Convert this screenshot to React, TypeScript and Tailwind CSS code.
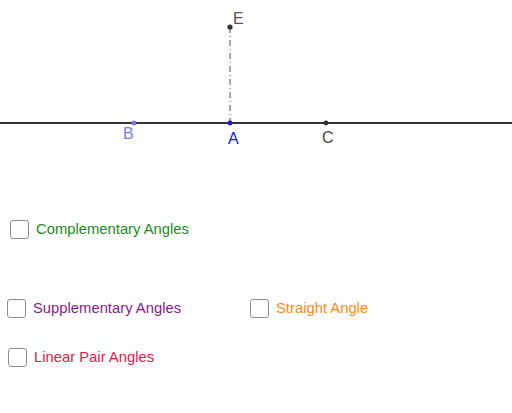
import React from "react";

function Check({ label, color }: { label: string; color: string }) {
  return (
    <label className="flex items-center gap-[7px] cursor-pointer select-none">
      <span className="block h-[19px] w-[19px] rounded-[3px] border border-[#8f8f8f] bg-white" />
      <span className={`text-[14.8px] leading-none ${color}`}>{label}</span>
    </label>
  );
}

export default function App() {
  return (
    <div className="h-[413px] w-[512px] overflow-hidden bg-white font-['Liberation_Sans',Arial,sans-serif]">
      <svg width="512" height="160" viewBox="0 0 512 160" className="block">
        <line x1="0" y1="123" x2="512" y2="123" stroke="#333" strokeWidth="2" />
        <line x1="230" y1="27" x2="230" y2="123" stroke="#555" strokeWidth="1" strokeDasharray="6 3 1 3" />
        <circle cx="134" cy="123" r="2.2" fill="#7b7bff" stroke="#5a5ad0" strokeWidth="0.5" />
        <circle cx="230" cy="123" r="2.4" fill="#1515ff" />
        <circle cx="326" cy="123" r="2.4" fill="#333" />
        <circle cx="230" cy="27" r="2.6" fill="#333" />
        <text x="233" y="24" fontSize="16" fill="#555">E</text>
        <text x="123" y="139" fontSize="16" fill="#7b7bff">B</text>
        <text x="228" y="144" fontSize="16" fill="#1515ff">A</text>
        <text x="322" y="143" fontSize="16" fill="#444">C</text>
      </svg>
      <div className="ml-[10px] mt-[60px]">
        <Check label="Complementary Angles" color="text-[#1e8a1e]" />
      </div>
      <div className="mt-[60px] flex">
        <div className="ml-[7px] w-[243px]">
          <Check label="Supplementary Angles" color="text-[#8a1a8a]" />
        </div>
        <Check label="Straight Angle" color="text-[#ff8a1a]" />
      </div>
      <div className="ml-[8px] mt-[30px]">
        <Check label="Linear Pair Angles" color="text-[#e0204a]" />
      </div>
    </div>
  );
}
